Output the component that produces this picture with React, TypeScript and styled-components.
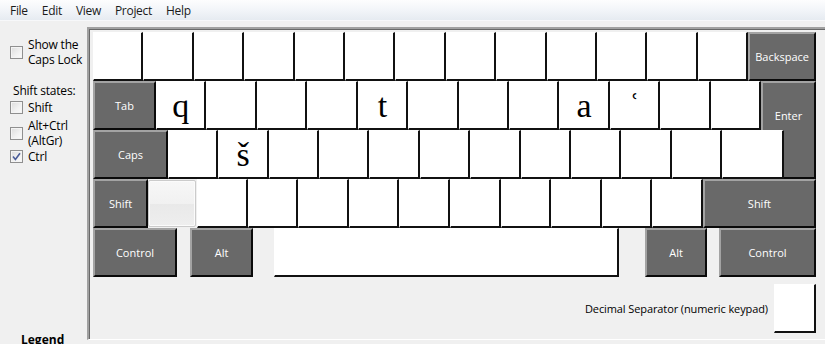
import React from "react";
import styled, { createGlobalStyle } from "styled-components";

const GlobalStyle = createGlobalStyle`
  html, body {
    margin: 0;
    padding: 0;
    background: #f0f0f0;
  }
  body {
    font-family: "Open Sans", "Noto Sans", sans-serif;
    font-size: 12px;
    color: #000;
  }
`;

const Window = styled.div`
  width: 825px;
  height: 344px;
  overflow: hidden;
  background: #f0f0f0;
  display: flex;
  flex-direction: column;
`;

const MenuBar = styled.div`
  height: 20px;
  flex: 0 0 20px;
  display: flex;
  align-items: center;
  padding-left: 3px;
  background: linear-gradient(to bottom, #fdfdfe 0%, #f1f4f8 55%, #e6ebf1 100%);
  border-bottom: 1px solid #f7f8fa;
`;

const MenuItem = styled.span`
  padding: 0 7px;
  font-size: 12px;
  color: #1b1b1b;
  letter-spacing: -0.3px;
`;

const Main = styled.div`
  display: flex;
  height: 330px;
  flex: 0 0 330px;
`;

const Side = styled.div`
  width: 87px;
  flex: 0 0 87px;
  display: flex;
  flex-direction: column;
  padding: 16px 0 3px 10px;
  box-sizing: border-box;
`;

const CheckRow = styled.label<{ $mt?: number }>`
  display: flex;
  align-items: center;
  gap: 5px;
  margin-top: ${(p) => p.$mt ?? 0}px;
  font-size: 12px;
  line-height: 15px;
  letter-spacing: -0.2px;
`;

const Box = styled.span`
  width: 13px;
  height: 13px;
  flex: 0 0 13px;
  box-sizing: border-box;
  border: 1px solid #8f8f8f;
  background: linear-gradient(135deg, #dcdcdc 0%, #f2f2f2 60%, #fbfbfb 100%);
  box-shadow: inset 0 0 0 1px #f4f4f4;
  display: flex;
  align-items: center;
  justify-content: center;
`;

const SectionTitle = styled.div`
  margin-top: 16px;
  padding-left: 3px;
  font-size: 12px;
  line-height: 15px;
  letter-spacing: -0.2px;
`;

const Legend = styled.div`
  margin-top: auto;
  padding-left: 11px;
  font-weight: bold;
  font-size: 12px;
  line-height: 16px;
`;

const Panel = styled.div`
  margin-top: 6px;
  width: 738px;
  height: 313px;
  box-sizing: border-box;
  border-style: solid;
  border-width: 2px 0 1px 2px;
  border-color: #a0a0a0 transparent #ffffff #a0a0a0;
  box-shadow: inset 1px 1px 0 #696969;
  padding: 3px 0 0 4px;
  display: flex;
  flex-direction: column;
`;

const Keys = styled.div`
  width: 723px;
  display: flex;
  flex-direction: column;
`;

const Row = styled.div`
  display: flex;
  height: 49px;
`;

const MidBlock = styled.div`
  display: flex;
  height: 98px;
`;

const MidRows = styled.div`
  width: 668px;
  flex: 0 0 668px;
  display: flex;
  flex-direction: column;
`;

const Key = styled.div<{ $w?: number; $dark?: boolean; $ml?: number; $over?: number }>`
  box-sizing: border-box;
  height: 100%;
  flex: ${(p) => (p.$w ? `0 0 ${p.$w}px` : "1 1 0")};
  min-width: 0;
  margin-left: ${(p) => p.$ml ?? 0}px;
  margin-right: ${(p) => (p.$over ? -p.$over : 0)}px;
  position: ${(p) => (p.$over ? "relative" : "static")};
  z-index: ${(p) => (p.$over ? 1 : "auto")};
  border-style: solid;
  border-width: ${(p) => (p.$dark ? "2px 2px 2px 2px" : "1px 2px 2px 1px")};
  border-color: ${(p) =>
    p.$dark ? "#a3a3a3 #0a0a0a #0a0a0a #a3a3a3" : "#ffffff #111111 #111111 #ffffff"};
  background: ${(p) => (p.$dark ? "#696969" : "#ffffff")};
  color: ${(p) => (p.$dark ? "#ffffff" : "#000000")};
  display: flex;
  align-items: center;
  justify-content: center;
  font-size: 11px;
  overflow: visible;
`;

const EnterKey = styled(Key)`
  align-items: flex-start;
  padding-top: 25px;
`;

const Glyph = styled.span`
  font-family: "Liberation Serif", "DejaVu Serif", serif;
  font-size: 34px;
  line-height: 1;
  color: #000;
  margin-top: 2px;
`;

const Slot = styled.div`
  flex: 0 0 49px;
  height: 100%;
  box-sizing: border-box;
  padding: 1px 1px 1px 0;
`;

const UnusedKey = styled.div`
  width: 100%;
  height: 100%;
  box-sizing: border-box;
  border: 1px solid #cbcbcb;
  border-radius: 2px;
  background: linear-gradient(to bottom, #f7f7f7 0%, #f1f1f1 50%, #e9e9e9 51%, #eeeeee 100%);
  box-shadow: inset 0 0 0 1px #fbfbfb;
`;

const DecimalRow = styled.div`
  display: flex;
  justify-content: flex-end;
  align-items: center;
  gap: 6px;
  margin-top: 7px;
  height: 49px;
`;

const DecimalText = styled.span`
  font-size: 11px;
  letter-spacing: -0.1px;
`;

const DecimalKey = styled(Key)`
  flex: 0 0 42px;
  width: 42px;
`;

function CheckBox({ checked }: { checked?: boolean }) {
  return (
    <Box>
      {checked && (
        <svg width="9" height="9" viewBox="0 0 9 9">
          <path d="M1 4.6 L3.4 7.4 L8 1.2" fill="none" stroke="#4a5c98" strokeWidth="1.6" />
        </svg>
      )}
    </Box>
  );
}

const row1 = Array.from({ length: 13 }, () => "");
const row2 = ["q", "", "", "", "t", "", "", "", "a", "\u02bf", "", ""];
const row3 = ["", "š", "", "", "", "", "", "", "", "", ""];
const row4 = Array.from({ length: 10 }, () => "");

export default function App() {
  return (
    <Window>
      <GlobalStyle />
      <MenuBar>
        <MenuItem>File</MenuItem>
        <MenuItem>Edit</MenuItem>
        <MenuItem>View</MenuItem>
        <MenuItem>Project</MenuItem>
        <MenuItem>Help</MenuItem>
      </MenuBar>
      <Main>
        <Side>
          <CheckRow>
            <CheckBox />
            <span>
              Show the
              <br />
              Caps Lock
            </span>
          </CheckRow>
          <SectionTitle>Shift states:</SectionTitle>
          <CheckRow $mt={2}>
            <CheckBox />
            <span>Shift</span>
          </CheckRow>
          <CheckRow $mt={3}>
            <CheckBox />
            <span>
              Alt+Ctrl
              <br />
              (AltGr)
            </span>
          </CheckRow>
          <CheckRow $mt={1}>
            <CheckBox checked />
            <span>Ctrl</span>
          </CheckRow>
          <Legend>Legend</Legend>
        </Side>
        <Panel>
          <Keys>
            <Row>
              {row1.map((c, i) => (
                <Key key={i}>{c}</Key>
              ))}
              <Key $dark $w={68}>Backspace</Key>
            </Row>
            <MidBlock>
              <MidRows>
                <Row>
                  <Key $dark $w={63}>Tab</Key>
                  {row2.map((c, i) => (
                    <Key key={i}>{c && <Glyph>{c}</Glyph>}</Key>
                  ))}
                </Row>
                <Row>
                  <Key $dark $w={75}>Caps</Key>
                  {row3.map((c, i) => (
                    <Key key={i}>{c && <Glyph>{c}</Glyph>}</Key>
                  ))}
                  <Key $w={62} $over={23} />
                </Row>
              </MidRows>
              <EnterKey $dark $w={55}>Enter</EnterKey>
            </MidBlock>
            <Row>
              <Key $dark $w={55}>Shift</Key>
              <Slot>
                <UnusedKey />
              </Slot>
              {row4.map((c, i) => (
                <Key key={i}>{c}</Key>
              ))}
              <Key $dark $w={113}>Shift</Key>
            </Row>
            <Row>
              <Key $dark $w={84}>Control</Key>
              <Key $dark $w={63} $ml={13}>Alt</Key>
              <Key $w={345} $ml={21} />
              <Key $dark $w={62} $ml={26}>Alt</Key>
              <Key $dark $w={97} $ml={12}>Control</Key>
            </Row>
            <DecimalRow>
              <DecimalText>Decimal Separator (numeric keypad)</DecimalText>
              <DecimalKey />
            </DecimalRow>
          </Keys>
        </Panel>
      </Main>
    </Window>
  );
}
